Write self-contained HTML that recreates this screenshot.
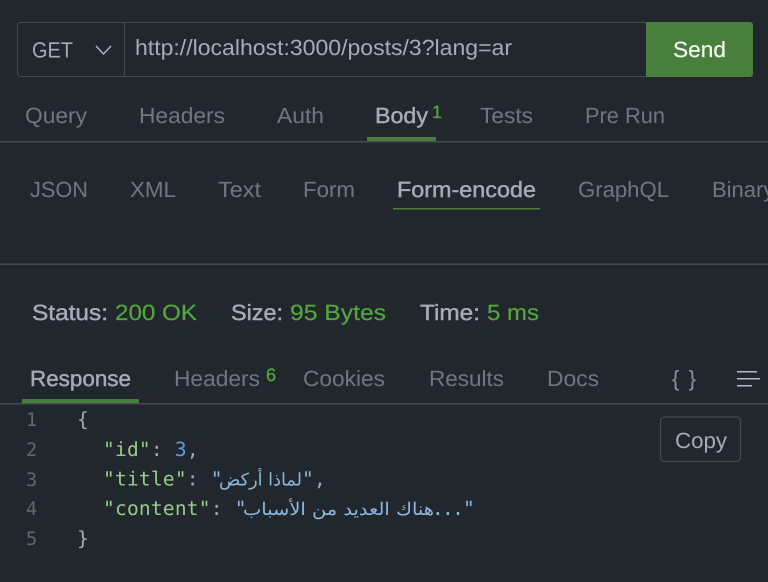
<!DOCTYPE html>
<html><head><meta charset="utf-8"><style>
html,body{margin:0;padding:0;background:#22272e;width:768px;height:582px;overflow:hidden}
svg{display:block;position:absolute;left:0;top:0}
text{font-family:"Liberation Sans",sans-serif;font-size:22px;fill:#6e7783;white-space:pre;text-rendering:geometricPrecision}
.a{fill:#a3acb9;stroke:#a3acb9;stroke-width:.45px}
.u{fill:#a3acb9}
.g{fill:#54a73d;stroke:#54a73d;stroke-width:.2px}
.s{font-size:18px;fill:#54a73d;stroke:#54a73d;stroke-width:.3px}
.m{font-family:"DejaVu Sans Mono","Liberation Mono",monospace;font-size:19.5px;letter-spacing:.23px}
.l{font-family:"DejaVu Sans Mono","Liberation Mono",monospace;font-size:18.5px;fill:#5f6873}
.r{font-family:"DejaVu Sans","Noto Sans CJK SC",sans-serif;font-size:17.5px;fill:#8cb8e0}
.p{fill:#a3acb9}.k{fill:#95cd89}.v{fill:#8cb8e0}.d{fill:#5b9fe3}
</style></head><body>
<svg width="768" height="582" viewBox="0 0 768 582" xmlns="http://www.w3.org/2000/svg">
<rect width="768" height="582" fill="#22272e"/>
<rect x="17.5" y="22.5" width="732" height="54" rx="3" fill="none" stroke="#454a50"/>
<line x1="124.5" y1="22" x2="124.5" y2="77" stroke="#454a50"/>
<path d="M646 22h104a3 3 0 0 1 3 3v49a3 3 0 0 1-3 3H646z" fill="#4a7e3d"/>
<text x="32" y="57.500" class="p" textLength="41" lengthAdjust="spacingAndGlyphs">GET</text>
<path d="M96 46l7.500 8 7.500-8" fill="none" stroke="#b5bbc4" stroke-width="1.300"/>
<text x="135" y="55" class="u" textLength="377" lengthAdjust="spacingAndGlyphs">http://localhost:3000/posts/3?lang=ar</text>
<text x="673" y="57" style="fill:#f4f6f4;stroke:#f4f6f4;stroke-width:.2px" textLength="53" lengthAdjust="spacingAndGlyphs">Send</text>

<text x="25" y="123" textLength="62" lengthAdjust="spacingAndGlyphs">Query</text>
<text x="139" y="123" textLength="86" lengthAdjust="spacingAndGlyphs">Headers</text>
<text x="277" y="123" textLength="47" lengthAdjust="spacingAndGlyphs">Auth</text>
<text x="375" y="123" class="a" textLength="53" lengthAdjust="spacingAndGlyphs">Body</text>
<text x="432" y="118" class="s">1</text>
<text x="480" y="123" textLength="53" lengthAdjust="spacingAndGlyphs">Tests</text>
<text x="585" y="123" textLength="80" lengthAdjust="spacingAndGlyphs">Pre Run</text>
<rect x="0" y="141" width="768" height="1.500" fill="#454a50"/>
<rect x="367" y="137" width="69" height="4" fill="#4a7e3d"/>

<text x="30" y="197" textLength="58" lengthAdjust="spacingAndGlyphs">JSON</text>
<text x="130" y="197" textLength="46" lengthAdjust="spacingAndGlyphs">XML</text>
<text x="218" y="197" textLength="43" lengthAdjust="spacingAndGlyphs">Text</text>
<text x="303" y="197" textLength="52" lengthAdjust="spacingAndGlyphs">Form</text>
<text x="397" y="197" class="a" textLength="139" lengthAdjust="spacingAndGlyphs">Form-encode</text>
<text x="578" y="197" textLength="91" lengthAdjust="spacingAndGlyphs">GraphQL</text>
<text x="712" y="197">Binary</text>
<rect x="393" y="208" width="147" height="1.500" fill="#4a7e3d"/>
<rect x="0" y="263.500" width="768" height="1.500" fill="#454a50"/>

<text x="32" y="320" class="a" textLength="76" lengthAdjust="spacingAndGlyphs">Status:</text>
<text x="115" y="320" class="g" textLength="82" lengthAdjust="spacingAndGlyphs">200 OK</text>
<text x="231" y="320" class="a" textLength="52" lengthAdjust="spacingAndGlyphs">Size:</text>
<text x="290" y="320" class="g" textLength="96" lengthAdjust="spacingAndGlyphs">95 Bytes</text>
<text x="420" y="320" class="a" textLength="60" lengthAdjust="spacingAndGlyphs">Time:</text>
<text x="487" y="320" class="g" textLength="52" lengthAdjust="spacingAndGlyphs">5 ms</text>

<text x="30" y="386" class="a" textLength="101" lengthAdjust="spacingAndGlyphs">Response</text>
<text x="174" y="386" textLength="86" lengthAdjust="spacingAndGlyphs">Headers</text>
<text x="266" y="381" class="s">6</text>
<text x="303" y="386" textLength="82" lengthAdjust="spacingAndGlyphs">Cookies</text>
<text x="429" y="386" textLength="75" lengthAdjust="spacingAndGlyphs">Results</text>
<text x="547" y="386" textLength="52" lengthAdjust="spacingAndGlyphs">Docs</text>
<text x="672" y="386" textLength="24" style="fill:#8b939e">{ }</text>
<rect x="737" y="371" width="20" height="1.500" fill="#b5bbc4"/>
<rect x="737" y="378" width="23" height="1.500" fill="#b5bbc4"/>
<rect x="737" y="385" width="15" height="1.500" fill="#b5bbc4"/>
<rect x="0" y="403" width="768" height="1.500" fill="#454a50"/>
<rect x="22" y="399" width="117" height="4" fill="#4a7e3d"/>

<rect x="660.500" y="417" width="80" height="44.500" rx="4" fill="none" stroke="#454a50" stroke-width="1.300"/>
<text x="675" y="448" class="p" textLength="52" lengthAdjust="spacingAndGlyphs">Copy</text>

<text x="26" y="426" class="l">1</text>
<text x="26" y="456" class="l">2</text>
<text x="26" y="486" class="l">3</text>
<text x="26" y="515" class="l">4</text>
<text x="26" y="545" class="l">5</text>
<text x="77" y="426" class="m p">{</text>
<text x="77" y="545" class="m p">}</text>
<text x="103" y="456" class="m"><tspan class="k">"id"</tspan><tspan class="p">:</tspan> <tspan class="d">3</tspan><tspan class="p">,</tspan></text>
<text x="103" y="485.500" class="m"><tspan class="k">"title"</tspan><tspan class="p">:</tspan> <tspan class="v">"</tspan></text>
<text x="219" y="485.500" class="r" textLength="83" lengthAdjust="spacingAndGlyphs">لماذا أركض</text>
<text x="302" y="485.500" class="m"><tspan class="v">"</tspan><tspan class="p">,</tspan></text>
<text x="103" y="515" class="m"><tspan class="k">"content"</tspan><tspan class="p">:</tspan> <tspan class="v">"</tspan></text>
<text x="243" y="515" class="r" textLength="191" lengthAdjust="spacingAndGlyphs">هناك العديد من الأسباب</text>
<text x="432" y="515" class="m v" style="letter-spacing:-1.700px">...</text>
<text x="463" y="515" class="m v">"</text>
</svg>
</body></html>
